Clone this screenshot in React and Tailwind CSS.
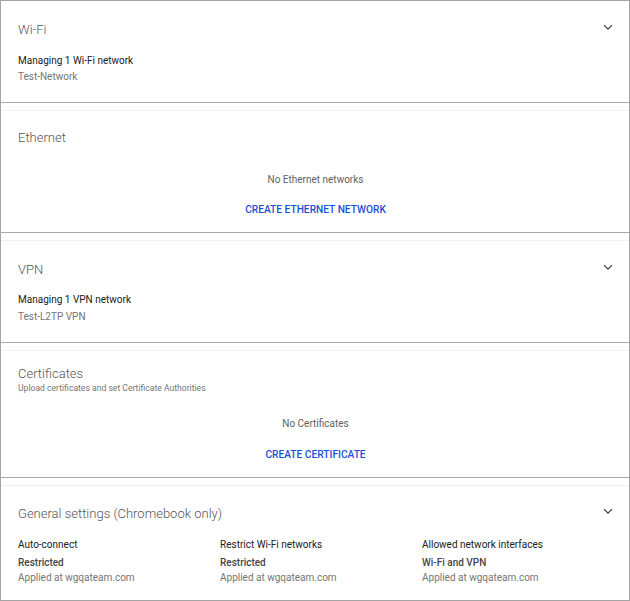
import React from 'react';

// Chevron used on collapsible cards
function Chevron() {
  return (
    <svg width="10" height="7" viewBox="0 0 10 7" className="mt-[4px]">
      <path d="M1 1.2 L5 5.2 L9 1.2" fill="none" stroke="#3a3a3a" strokeWidth="1.1" />
    </svg>
  );
}

function Title({ children, chevron }) {
  return (
    <div className="flex items-start justify-between">
      <h2 className="text-[13px] leading-[20px] text-[#555555] font-light">{children}</h2>
      {chevron && <div><Chevron /></div>}
    </div>
  );
}

function Managed({ label, name, top, gap }) {
  return (
    <div className={top}>
      <div className="text-[10px] leading-[16px] text-[#202020]">{label}</div>
      <div className={`text-[10px] leading-[16px] text-[#757575] ${gap}`}>{name}</div>
    </div>
  );
}

function Empty({ text, action, top, gap }) {
  return (
    <div className={`flex flex-col items-center ${top}`}>
      <div className="text-[10px] leading-[16px] text-[#616161]">{text}</div>
      <button className={`text-[10.2px] leading-[16px] font-medium text-[#1a4fd8] ${gap}`}>{action}</button>
    </div>
  );
}

const settings = [
  { label: 'Auto-connect', value: 'Restricted' },
  { label: 'Restrict Wi-Fi networks', value: 'Restricted' },
  { label: 'Allowed network interfaces', value: 'Wi-Fi and VPN' },
];

export default function App() {
  return (
    <div className="w-[630px] h-[601px] border border-[#a4a4a4] bg-white flex flex-col" style={{ fontFamily: 'Roboto, "Liberation Sans", sans-serif' }}>
      {/* Wi-Fi */}
      <section className="h-[102px] border-b border-[#a8a8a8] pl-[17px] pr-[16px] pt-[19px]">
        <Title chevron>Wi-Fi</Title>
        <Managed label="Managing 1 Wi-Fi network" name="Test-Network" top="mt-[13px]" gap="mt-0" />
      </section>

      {/* Ethernet */}
      <section className="mt-[7px] h-[123px] border-t border-b border-t-[#f0f0f0] border-b-[#a8a8a8] pl-[17px] pr-[16px] pt-[17px]">
        <Title>Ethernet</Title>
        <Empty text="No Ethernet networks" action="CREATE ETHERNET NETWORK" top="mt-[24px]" gap="mt-[14px]" />
      </section>

      {/* VPN */}
      <section className="mt-[7px] h-[103px] border-t border-b border-t-[#f0f0f0] border-b-[#a8a8a8] pl-[17px] pr-[16px] pt-[19px]">
        <Title chevron>VPN</Title>
        <Managed label="Managing 1 VPN network" name="Test-L2TP VPN" top="mt-[12px]" gap="mt-[1px]" />
      </section>

      {/* Certificates */}
      <section className="mt-[7px] h-[128px] border-t border-b border-t-[#f0f0f0] border-b-[#a8a8a8] pl-[17px] pr-[16px] pt-[13px]">
        <Title>Certificates</Title>
        <div className="text-[8.6px] leading-[12px] text-[#757575] -mt-[2px]">Upload certificates and set Certificate Authorities</div>
        <Empty text="No Certificates" action="CREATE CERTIFICATE" top="mt-[22px]" gap="mt-[15px]" />
      </section>

      {/* General settings */}
      <section className="mt-[7px] flex-1 border-t border-t-[#f0f0f0] pl-[17px] pr-[16px] pt-[18px]">
        <Title chevron>General settings (Chromebook only)</Title>
        <div className="grid grid-cols-3 w-[606px] mt-[13px]">
          {settings.map(s => (
            <div key={s.label} className="flex flex-col">
              <div className="text-[10px] leading-[16px] text-[#202020]">{s.label}</div>
              <div className="text-[10px] leading-[16px] font-medium text-[#444] mt-[2px]">{s.value}</div>
              <div className="text-[10px] leading-[16px] text-[#757575] -mt-[1px]">Applied at wgqateam.com</div>
            </div>
          ))}
        </div>
      </section>
    </div>
  );
}
